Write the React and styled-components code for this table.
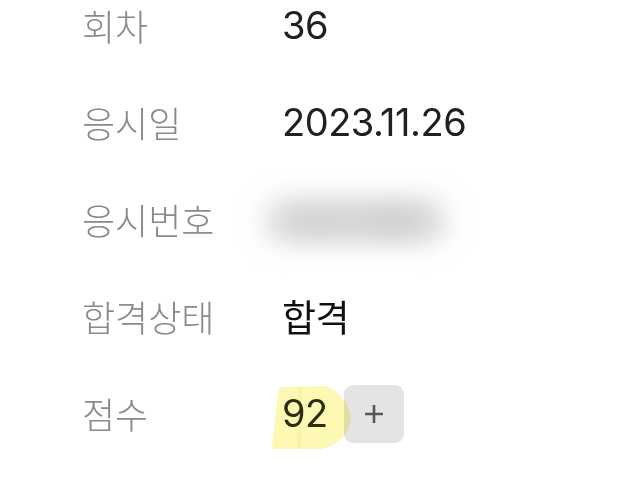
import React from 'react'
import styled, { createGlobalStyle } from 'styled-components'

const Global = createGlobalStyle`
  html, body {
    margin: 0;
    padding: 0;
    background: #ffffff;
  }
  body {
    width: 637px;
    height: 480px;
    overflow: hidden;
    font-family: Inter, "Noto Sans CJK KR", sans-serif;
  }
`

const Sheet = styled.div`
  display: grid;
  grid-template-columns: 200px auto;
  grid-auto-rows: 50px;
  row-gap: 47px;
  padding-left: 82px;
`

const Label = styled.div`
  display: flex;
  align-items: center;
  font-family: "Noto Sans CJK KR", sans-serif;
  font-size: 36px;
  font-weight: 300;
  color: #8a8a8a;
`

const Value = styled.div`
  display: flex;
  align-items: center;
  gap: 16px;
  font-family: ${p => (p.$korean ? '"Noto Sans CJK KR", sans-serif' : 'Inter, "Noto Sans", sans-serif')};
  font-size: ${p => (p.$korean ? '37px' : '38px')};
  font-weight: 400;
  color: ${p => (p.$korean ? '#111111' : '#202020')};
  letter-spacing: -0.5px;
`

const Blurred = styled.div`
  width: 186px;
  height: 46px;
  margin-left: -20px;
  margin-top: 4px;
  border-radius: 23px;
  background: linear-gradient(90deg, #e6e6e6 0%, #d3d3d3 22%, #d6d6d6 50%, #cfcfcf 74%, #e2e2e2 100%);
  filter: blur(12px);
`

const Marked = styled.span`
  position: relative;
  display: inline-block;
`

const Marker = styled.svg`
  position: absolute;
  left: -10px;
  top: -4px;
  width: 80px;
  height: 64px;
  z-index: 3;
  mix-blend-mode: multiply;
  pointer-events: none;
`

const MarkedText = styled.span`
  position: relative;
  z-index: 1;
  color: #2e2d1a;
`

const PlusButton = styled.button`
  display: flex;
  align-items: center;
  justify-content: center;
  width: 60px;
  height: 58px;
  margin-top: 2px;
  padding: 0;
  border: none;
  border-radius: 9px;
  background: #e4e4e4;
  color: #575757;
  position: relative;
  z-index: 2;
`

const rows = [
  { label: '회차', value: '36' },
  { label: '응시일', value: '2023.11.26' },
  { label: '응시번호', blurred: true },
  { label: '합격상태', value: '합격', korean: true },
]

export default function App() {
  return (
    <>
      <Global />
      <Sheet>
        {rows.map(r => (
          <React.Fragment key={r.label}>
            <Label>{r.label}</Label>
            <Value $korean={r.korean}>{r.blurred ? <Blurred /> : r.value}</Value>
          </React.Fragment>
        ))}
        <Label>점수</Label>
        <Value>
          <Marked>
            <Marker viewBox="0 0 80 64">
              <path
                d="M7 1 L54 0 C68 6 78 18 79 32 C78 46 68 58 50 63 L0 63 C2 44 4 22 7 1 Z"
                fill="#fdf8b4"
              />
              <path d="M26 1 L30 1 L29 63 L25 63 Z" fill="#f9f09c" opacity="0.6" />
            </Marker>
            <MarkedText>92</MarkedText>
          </Marked>
          <PlusButton>
            <svg width="22" height="22" viewBox="0 0 22 22">
              <path d="M11 2 V20 M2 11 H20" stroke="currentColor" strokeWidth="2.6" />
            </svg>
          </PlusButton>
        </Value>
      </Sheet>
    </>
  )
}
